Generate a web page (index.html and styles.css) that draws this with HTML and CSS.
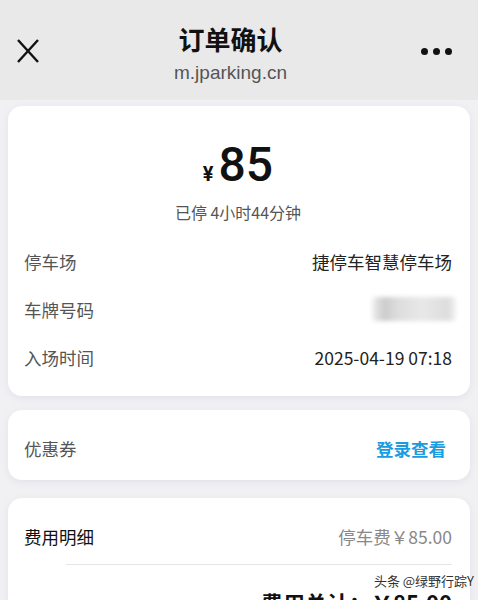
FILE: index.html
```html
<!DOCTYPE html>
<html lang="zh-CN">
  <head>
    <meta charset="UTF-8" />
    <meta name="viewport" content="width=device-width, initial-scale=1.0" />
    <title>订单确认</title>
    <link rel="stylesheet" href="styles.css">
  </head>
  <body>
    <div class="topbar">
      <svg class="closeBtn" width="24" height="26" viewBox="0 0 24 26">
        <path d="M2 2 L22 24 M22 2 L2 24" stroke="#111" stroke-width="2.4" fill="none" />
      </svg>
      <div class="titleBox">
        <h1>订单确认</h1>
        <p class="host">m.jparking.cn</p>
      </div>
      <div class="moreBtn"><i></i><i></i><i></i></div>
    </div>

    <div class="page">
      <section class="card orderCard">
        <div class="price"><span class="yen">¥</span>85</div>
        <p class="duration">已停 4小时44分钟</p>
        <div class="row">
          <span class="label">停车场</span>
          <span class="value">捷停车智慧停车场</span>
        </div>
        <div class="row">
          <span class="label">车牌号码</span>
          <span class="plate"></span>
        </div>
        <div class="row">
          <span class="label">入场时间</span>
          <span class="value">2025-04-19 07:18</span>
        </div>
      </section>

      <section class="card couponCard">
        <div class="row">
          <span class="label">优惠券</span>
          <span class="login">登录查看</span>
        </div>
      </section>

      <section class="card feeCard">
        <div class="row">
          <span class="label dark">费用明细</span>
          <span class="value grey">停车费￥85.00</span>
        </div>
        <div class="line"></div>
        <div class="total">费用总计：￥85.00</div>
      </section>
    </div>

    <div class="mark">头条 @绿野行踪Y</div>
  </body>
</html>
```

FILE: styles.css
```css
* {
  box-sizing: border-box;
}

body {
  margin: 0;
  height: 600px;
  overflow: hidden;
  background: #f1f1f4;
  font-family: "Noto Sans CJK SC", "Noto Sans", sans-serif;
  color: #222;
}

.topbar {
  height: 100px;
  background: #e9e9e9;
  display: flex;
  align-items: flex-start;
  justify-content: space-between;
  padding: 0 26px 0 16px;
}
.closeBtn {
  margin-top: 38px;
}
.titleBox {
  text-align: center;
  padding-top: 20px;
}
h1 {
  margin: 0;
  font-size: 26px;
  line-height: 38px;
  font-weight: bold;
  color: #111;
}
.host {
  margin: 0;
  font-family: "Liberation Sans", sans-serif;
  font-size: 19px;
  line-height: 30px;
  color: #555;
}
.moreBtn {
  display: flex;
  gap: 5px;
  margin-top: 48px;
}
.moreBtn i {
  width: 7px;
  height: 7px;
  border-radius: 50%;
  background: #111;
}

.page {
  padding: 6px 8px 0 8px;
  display: flex;
  flex-direction: column;
  gap: 14px;
}

.card {
  background: #fff;
  border-radius: 14px;
  padding: 0 18px 0 16px;
  box-shadow: 0 2px 6px rgba(180, 185, 200, 0.25);
}

.orderCard {
  padding-top: 31px;
  padding-bottom: 15px;
}
.price {
  text-align: center;
  font-family: "Roboto", sans-serif;
  font-size: 48px;
  font-weight: 500;
  line-height: 56px;
  color: #111;
}
.yen {
  font-size: 20px;
  font-weight: bold;
  margin-right: 5px;
}
.duration {
  margin: -2px 0 13px;
  text-align: center;
  font-size: 16px;
  line-height: 24px;
  color: #555;
}

.row {
  display: flex;
  justify-content: space-between;
  align-items: center;
  height: 48px;
  font-size: 17.5px;
}
.label {
  color: #555;
}
.label.dark {
  color: #111;
}
.value {
  color: #222;
}
.value.grey {
  color: #888;
}
.plate {
  width: 84px;
  height: 24px;
  margin-right: -4px;
  border-radius: 4px;
  background: linear-gradient(90deg, #eee 0%, #ccc 15%, #ddd 30%, #e8e8e8 60%, #ddd 90%, #f2f2f2 100%);
  filter: blur(2px);
}

.couponCard {
  padding-top: 14px;
  padding-bottom: 8px;
}
.login {
  color: #1a9ce0;
  font-weight: bold;
  margin-right: 6px;
}

.feeCard {
  margin-top: 4px;
  padding-top: 14px;
  height: 120px;
}
.line {
  height: 1px;
  background: #e6e6e6;
  margin: 4px 0 0 42px;
}
.total {
  text-align: right;
  font-size: 22px;
  line-height: 30px;
  font-weight: bold;
  margin-top: 22px;
  color: #111;
}

.mark {
  position: absolute;
  right: 4px;
  top: 572px;
  font-size: 13px;
  line-height: 18px;
  color: #333;
  text-shadow: 0 0 2px #fff, 0 0 2px #fff;
}
```
